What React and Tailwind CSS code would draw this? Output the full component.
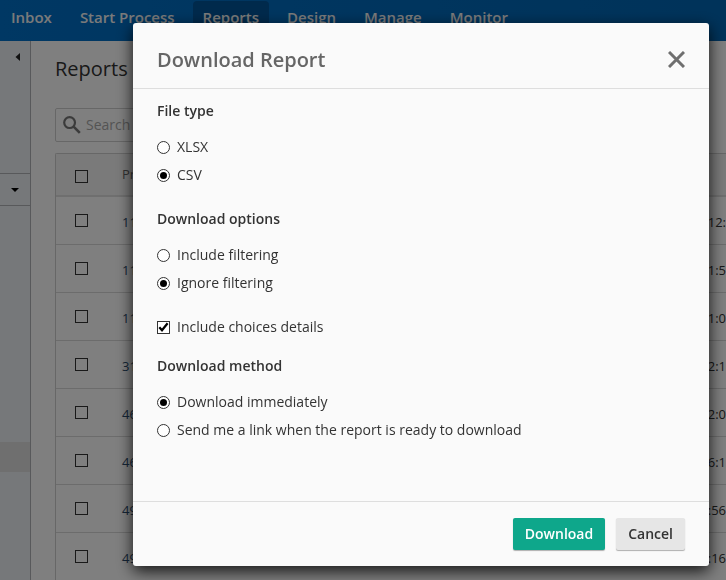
import React, { useState } from 'react';

const tabs = ['Inbox', 'Start Process', 'Reports', 'Design', 'Manage', 'Monitor'];

const rows = [
  { id: 1, process: '11', time: '12:' },
  { id: 2, process: '11', time: '1:5' },
  { id: 3, process: '11', time: '1:0' },
  { id: 4, process: '31', time: '2:1' },
  { id: 5, process: '46', time: '2:0' },
  { id: 6, process: '46', time: '6:1' },
  { id: 7, process: '49', time: ':56' },
  { id: 8, process: '49', time: ':16' },
];

const boxClass = 'block appearance-none w-[13px] h-[13px] border border-[#333] shrink-0';

const TopNav = () => (
  <nav className="h-[41px] shrink-0 flex gap-2 pl-px pt-px bg-linear-to-r from-[#0070c8] to-[#0066b4]">
    {tabs.map((tab) => (
      <a
        key={tab}
        href="#"
        className={`px-[10px] pt-[6px] rounded-t-sm text-[15px] leading-5 font-semibold whitespace-nowrap text-[#f4f4f4] ${
          tab === 'Reports' ? 'bg-[#005499]' : ''
        }`}
      >
        {tab}
      </a>
    ))}
  </nav>
);

const SideRail = () => (
  <aside className="w-[31px] shrink-0 flex flex-col bg-[#ecf0f5] border-r border-[#b0b2b6]">
    <button aria-label="Collapse" className="h-8 flex items-center justify-end pr-[10px]">
      <svg width="5" height="8" viewBox="0 0 5 8"><path d="M5 0v8L0.5 4z" fill="#222" /></svg>
    </button>
    <button aria-label="More" className="mt-[100px] h-[33px] flex items-center justify-center border-y border-[#b0b2b6]">
      <svg width="8" height="4" viewBox="0 0 8 4"><path d="M0 0h8L4 4z" fill="#000" /></svg>
    </button>
    <div className="mt-[236px] h-[30px] bg-[#dedede]" />
  </aside>
);

const ReportsPage = () => (
  <main className="flex-1 min-w-0 pl-6 pt-[14px]">
    <h1 className="text-xl leading-7 text-[#333]">Reports</h1>
    <div className="mt-[25px] mr-6 h-[34px] flex items-center pl-[7px] gap-[5px] border border-[#cfcfcf] rounded-xs">
      <svg width="18" height="18" viewBox="0 0 18 18" fill="none" stroke="#777" strokeWidth="2.2">
        <circle cx="6.6" cy="6.6" r="5.4" />
        <path d="M10.6 10.6l6.2 6.2" strokeWidth="2.6" />
      </svg>
      <input
        type="text"
        placeholder="Search"
        aria-label="Search"
        className="flex-1 min-w-0 text-sm outline-none placeholder:text-[#a9a9a9]"
      />
    </div>
    <table className="mt-[11px] w-full border-separate border-spacing-0 border-t border-l border-[#cfcfcf] rounded-tl-xs text-[13px] text-[#333]">
      <thead>
        <tr className="h-[43px] bg-[#f4f4f4]">
          <th className="w-[66px] pl-[19px] pt-1 border-b-2 border-[#dedede]">
            <input type="checkbox" aria-label="Select all" className={boxClass} />
          </th>
          <th className="text-left font-normal text-[#666] border-b-2 border-[#dedede]">Process</th>
          <th className="border-b-2 border-[#dedede]" />
        </tr>
      </thead>
      <tbody>
        {rows.map((row) => (
          <tr key={row.id} className="h-12">
            <td className="pl-[19px] border-b border-[#d8d8d8]">
              <input type="checkbox" aria-label={`Select row ${row.id}`} className={boxClass} />
            </td>
            <td className="pt-1 border-b border-[#d8d8d8]">
              <a href="#" className="text-[#2c4d70]">{row.process}</a>
            </td>
            <td className="pt-1 text-right border-b border-[#d8d8d8]">{row.time}</td>
          </tr>
        ))}
      </tbody>
    </table>
  </main>
);

const RadioGroup = ({ title, name, options, value, onChange, className }) => (
  <fieldset className={className}>
    <legend className="mb-3 leading-5 font-semibold">{title}</legend>
    {options.map((option) => (
      <label key={option} className="h-7 flex items-center gap-[7px]">
        <input
          type="radio"
          name={name}
          checked={value === option}
          onChange={() => onChange(option)}
          className="appearance-none w-[13px] h-[13px] shrink-0 rounded-full border border-[#333] bg-white flex items-center justify-center checked:before:block checked:before:w-[7px] checked:before:h-[7px] checked:before:rounded-full checked:before:bg-black"
        />
        {option}
      </label>
    ))}
  </fieldset>
);

const DownloadDialog = () => {
  const [fileType, setFileType] = useState('CSV');
  const [filtering, setFiltering] = useState('Ignore filtering');
  const [details, setDetails] = useState(true);
  const [method, setMethod] = useState('Download immediately');

  return (
    <div role="dialog" aria-labelledby="dialog-title" className="w-full bg-[#fafafa] rounded-[3px] text-sm text-[#333] shadow-[0_5px_16px_rgba(0,0,0,0.85)]">
      <header className="h-[66px] flex items-center justify-between px-6 pt-2 border-b border-[#dedede]">
        <h2 id="dialog-title" className="text-xl leading-7 font-semibold text-[#666]">Download Report</h2>
        <button aria-label="Close">
          <svg width="17" height="17" viewBox="0 0 17 17" stroke="#6f6f6f" strokeWidth="3">
            <path d="M1 1l15 15M16 1L1 16" />
          </svg>
        </button>
      </header>

      <div className="px-6 pt-3 pb-[57px]">
        <RadioGroup title="File type" name="fileType" options={['XLSX', 'CSV']} value={fileType} onChange={setFileType} />
        <RadioGroup
          className="mt-5"
          title="Download options"
          name="filtering"
          options={['Include filtering', 'Ignore filtering']}
          value={filtering}
          onChange={setFiltering}
        />
        <label className="mt-4 h-7 flex items-center gap-[7px]">
          <span className="grid shrink-0">
            <input
              type="checkbox"
              checked={details}
              onChange={(e) => setDetails(e.target.checked)}
              className="peer col-start-1 row-start-1 appearance-none w-[13px] h-[13px] border border-[#333] bg-white"
            />
            <svg className="col-start-1 row-start-1 pointer-events-none invisible peer-checked:visible" width="13" height="13" viewBox="0 0 13 13" fill="none" stroke="#000" strokeWidth="2.2">
              <path d="M2.3 6.2L5 9.3L10.6 2.2" />
            </svg>
          </span>
          Include choices details
        </label>
        <RadioGroup
          className="mt-[15px]"
          title="Download method"
          name="method"
          options={['Download immediately', 'Send me a link when the report is ready to download']}
          value={method}
          onChange={setMethod}
        />
      </div>

      <footer className="flex justify-end gap-[11px] px-6 py-4 border-t border-[#dedede]">
        <button className="h-8 px-3 rounded-xs bg-[#0ea78b] text-white font-semibold shadow-[0_1px_1px_rgba(0,0,0,0.3)]">Download</button>
        <button className="h-8 px-3 rounded-xs bg-[#e6e6e6] font-semibold shadow-[0_1px_1px_rgba(0,0,0,0.3)]">Cancel</button>
      </footer>
    </div>
  );
};

export default function App() {
  return (
    <div className="h-screen overflow-hidden flex flex-col bg-white font-['Open_Sans',sans-serif]">
      <TopNav />
      <div className="flex-1 min-h-0 flex">
        <SideRail />
        <ReportsPage />
      </div>
      <div className="fixed inset-0 flex items-start pt-[23px] pl-[133px] pr-[17px] bg-black/50">
        <DownloadDialog />
      </div>
    </div>
  );
}
